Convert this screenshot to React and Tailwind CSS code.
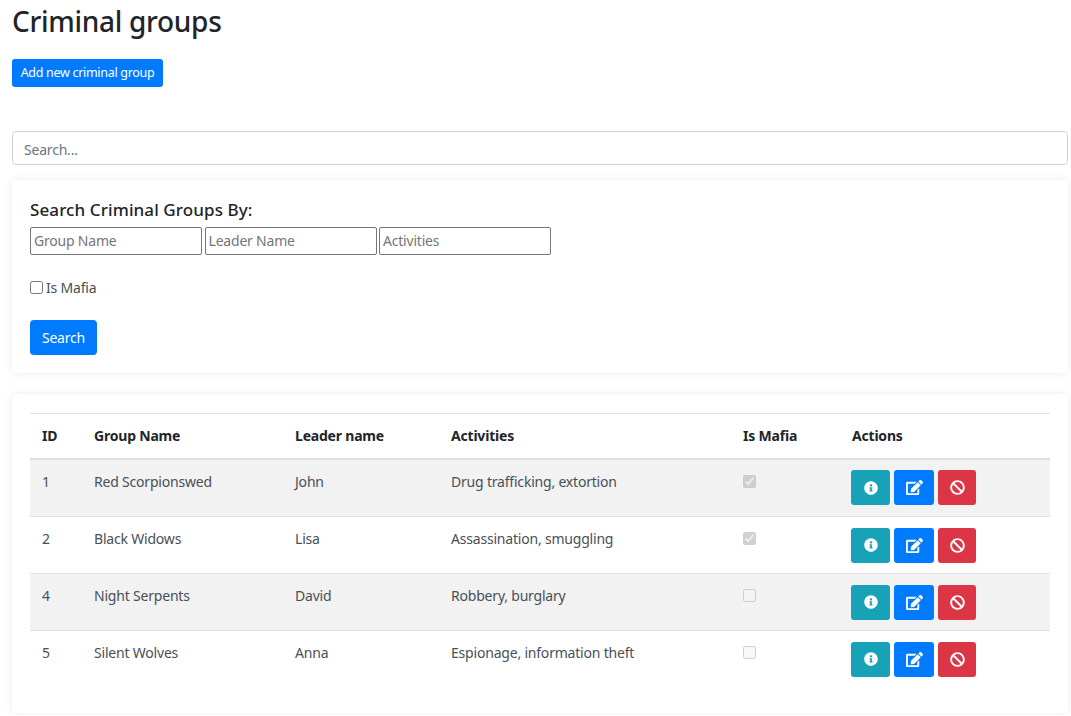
import React from 'react';
import { FaInfoCircle, FaEdit, FaBan } from 'react-icons/fa';

const groups = [
  { id: 1, name: 'Red Scorpionswed', leader: 'John', activities: 'Drug trafficking, extortion', mafia: true },
  { id: 2, name: 'Black Widows', leader: 'Lisa', activities: 'Assassination, smuggling', mafia: true },
  { id: 4, name: 'Night Serpents', leader: 'David', activities: 'Robbery, burglary', mafia: false },
  { id: 5, name: 'Silent Wolves', leader: 'Anna', activities: 'Espionage, information theft', mafia: false },
];

const headers = ['ID', 'Group Name', 'Leader name', 'Activities', 'Is Mafia', 'Actions'];

export default function App() {
  return (
    <div className="bg-white pl-3 pr-[3px] pb-[2px] text-[14px] text-[#212529] font-['Noto_Sans','Open_Sans',sans-serif] tracking-[-0.2px]">
      {/* Page header */}
      <h1 className="pt-[2px] h-[59px] text-[28px] leading-[38px] font-medium tracking-[-0.3px]">Criminal groups</h1>
      <button className="block h-[28px] w-[151px] rounded-[3px] bg-[#007bff] text-[12.5px] tracking-[-0.3px] text-white">
        Add new criminal group
      </button>

      <input
        placeholder="Search..."
        className="mt-[44px] block h-[34px] w-full rounded border border-[#ced4da] px-[11px] pt-[2px] text-[14px] placeholder:text-[#6c757d] outline-none"
      />

      {/* Filters */}
      <div className="mt-[15px] h-[193px] rounded bg-white px-[18px] pt-[18px] shadow-[0_0_8px_rgba(0,0,0,0.08)]">
        <h5 className="h-[29px] text-[17px] leading-[24px] font-medium tracking-[0.1px]">Search Criminal Groups By:</h5>
        <div className="flex gap-[2.5px]">
          {['Group Name', 'Leader Name', 'Activities'].map((p) => (
            <input
              key={p}
              placeholder={p}
              className="h-[28px] w-[172px] rounded-[2px] border border-[#767676] px-[3px] pb-[1px] text-[14px] placeholder:text-[#757575] outline-none"
            />
          ))}
        </div>
        <label className="mt-[22px] flex h-[20px] items-center gap-[3px] text-[#495057]">
          <input type="checkbox" className="m-0 h-[13px] w-[13px]" />
          Is Mafia
        </label>
        <button className="mt-[23px] block h-[35px] w-[67px] rounded bg-[#007bff] text-[14px] text-white">Search</button>
      </div>

      {/* Results */}
      <div className="mt-[21px] h-[319px] rounded bg-white px-[18px] pt-[19px] shadow-[0_0_8px_rgba(0,0,0,0.08)]">
        <table className="w-full table-fixed border-collapse">
          <colgroup>
            <col className="w-[52px]" />
            <col className="w-[201px]" />
            <col className="w-[156px]" />
            <col className="w-[292px]" />
            <col className="w-[109px]" />
            <col className="w-[210px]" />
          </colgroup>
          <thead>
            <tr className="h-[45px] border-t border-b-2 border-t-[#dee2e6] border-b-[#dee2e6]">
              {headers.map((h) => (
                <th key={h} className="px-3 text-left text-[14px] font-bold">{h}</th>
              ))}
            </tr>
          </thead>
          <tbody>
            {groups.map((g, i) => (
              <tr key={g.id} className={`${i === 0 ? 'h-[58px]' : 'h-[57px]'} border-t border-[#dee2e6] first:border-t-0 ${i % 2 === 0 ? 'bg-[#f2f2f2]' : ''}`}>
                <td className="px-3 pt-[11px] align-top text-[#495057]">{g.id}</td>
                <td className="px-3 pt-[11px] align-top text-[#495057]">{g.name}</td>
                <td className="px-3 pt-[11px] align-top text-[#495057]">{g.leader}</td>
                <td className="px-3 pt-[11px] align-top text-[#495057]">{g.activities}</td>
                <td className="px-3 pt-[15px] align-top">
                  <input type="checkbox" disabled checked={g.mafia} readOnly className="m-0 block h-[13px] w-[13px]" />
                </td>
                <td className="px-[11px] align-middle">
                  <div className="flex gap-1">
                    <button className="flex h-[35px] w-[39px] items-center justify-center rounded-[3px] bg-[#17a2b8] text-white">
                      <FaInfoCircle size={14} />
                    </button>
                    <button className="flex h-[35px] w-[40px] items-center justify-center rounded-[3px] bg-[#007bff] text-white">
                      <FaEdit size={17} />
                    </button>
                    <button className="flex h-[35px] w-[38px] items-center justify-center rounded-[3px] bg-[#dc3545] text-white">
                      <FaBan size={15} />
                    </button>
                  </div>
                </td>
              </tr>
            ))}
          </tbody>
        </table>
      </div>
    </div>
  );
}
